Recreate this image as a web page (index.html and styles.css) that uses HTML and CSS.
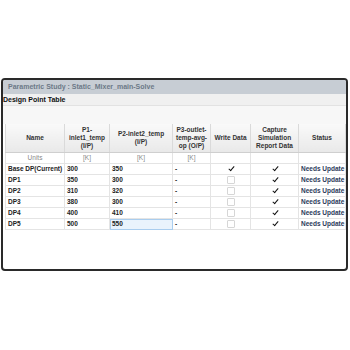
FILE: index.html
```html
<!DOCTYPE html>
<html lang="en">
<head>
    <meta charset="UTF-8">
    <title>Parametric Study</title>
    <link rel="stylesheet" href="styles.css">
</head>
<body>
    <div class="window">
        <div class="title-bar">Parametric Study : Static_Mixer_main-Solve</div>
        <div class="section-title">Design Point Table</div>
        <div class="band"></div>

        <table class="dp-table">
            <colgroup>
                <col class="c-name"><col class="c-p1"><col class="c-p2"><col class="c-p3">
                <col class="c-write"><col class="c-capture"><col class="c-status">
            </colgroup>
            <thead>
                <tr>
                    <th>Name</th>
                    <th>P1-<br>inlet1_temp<br>(I/P)</th>
                    <th>P2-inlet2_temp<br>(I/P)</th>
                    <th>P3-outlet-<br>temp-avg-<br>op (O/P)</th>
                    <th>Write Data</th>
                    <th>Capture<br>Simulation<br>Report Data</th>
                    <th>Status</th>
                </tr>
            </thead>
            <tbody>
                <tr class="units">
                    <td>Units</td><td>[K]</td><td>[K]</td><td>[K]</td><td></td><td></td><td></td>
                </tr>
                <tr>
                    <td>Base DP(Current)</td><td>300</td><td>350</td><td>-</td>
                    <td class="chk"><span class="box on"></span></td>
                    <td class="chk"><span class="box on"></span></td>
                    <td class="status">Needs Update</td>
                </tr>
                <tr>
                    <td>DP1</td><td>350</td><td>300</td><td>-</td>
                    <td class="chk"><span class="box"></span></td>
                    <td class="chk"><span class="box on"></span></td>
                    <td class="status">Needs Update</td>
                </tr>
                <tr>
                    <td>DP2</td><td>310</td><td>320</td><td>-</td>
                    <td class="chk"><span class="box"></span></td>
                    <td class="chk"><span class="box on"></span></td>
                    <td class="status">Needs Update</td>
                </tr>
                <tr>
                    <td>DP3</td><td>380</td><td>300</td><td>-</td>
                    <td class="chk"><span class="box"></span></td>
                    <td class="chk"><span class="box on"></span></td>
                    <td class="status">Needs Update</td>
                </tr>
                <tr>
                    <td>DP4</td><td>400</td><td>410</td><td>-</td>
                    <td class="chk"><span class="box"></span></td>
                    <td class="chk"><span class="box on"></span></td>
                    <td class="status">Needs Update</td>
                </tr>
                <tr>
                    <td>DP5</td><td>500</td><td class="selected">550</td><td>-</td>
                    <td class="chk"><span class="box"></span></td>
                    <td class="chk"><span class="box on"></span></td>
                    <td class="status">Needs Update</td>
                </tr>
            </tbody>
        </table>
    </div>
</body>
</html>
```
FILE: styles.css
```css
body {
    margin: 0;
    background: #fff;
    font-family: "Liberation Sans", Arial, sans-serif;
}
.window {
    margin: 78px 0 0 1px;
    width: 343px;
    height: 189px;
    border: 2px solid #2a2a2a;
    border-radius: 4px;
    background: #fff;
    overflow: hidden;
}
.title-bar {
    height: 14px;
    line-height: 14px;
    padding-left: 5px;
    background: #c7cdd4;
    color: #6c7987;
    font-size: 7px;
    font-weight: bold;
}
.section-title {
    height: 11px;
    line-height: 11px;
    padding-left: 0;
    background: #f0f0f0;
    border-bottom: 1px solid #e2e2e2;
    font-size: 7px;
    font-weight: bold;
    color: #111;
}
.band {
    height: 18px;
    background: #f7f7f7;
}
.dp-table {
    margin-left: 2px;
    width: 340px;
    border-collapse: collapse;
    table-layout: fixed;
    font-size: 6.5px;
    font-weight: bold;
    color: #222;
}
.c-name { width: 59px; }
.c-p1 { width: 45px; }
.c-p2 { width: 63px; }
.c-p3 { width: 38px; }
.c-write { width: 40px; }
.c-capture { width: 48px; }
.c-status { width: 47px; }
.dp-table th {
    height: 28px;
    padding: 0;
    background: linear-gradient(#f9f9f9, #e9e9e9);
    border-left: 1px solid #dadada;
    border-right: 1px solid #dadada;
    border-bottom: 1px solid #cfcfcf;
    line-height: 8px;
    color: #333;
    text-align: center;
}
.dp-table td {
    height: 10px;
    padding: 0 0 0 2px;
    border: 1px solid #e4e4e4;
    line-height: 10px;
    white-space: nowrap;
    overflow: hidden;
}
.units td {
    text-align: center;
    font-weight: normal;
    color: #888;
    padding: 0;
}
.selected {
    background: #e9f3fc;
    outline: 1px solid #a9cdee;
    outline-offset: -1px;
}
.chk {
    text-align: center;
}
.dp-table td.chk {
    padding: 0;
}
.box {
    display: inline-block;
    width: 6px;
    height: 6px;
    border: 1px solid #d6d6d6;
    border-radius: 1px;
    vertical-align: middle;
    position: relative;
}
.box.on {
    border-color: transparent;
}
.box.on::after {
    content: "";
    position: absolute;
    left: 2px;
    top: -1px;
    width: 2px;
    height: 5px;
    border-right: 1.5px solid #111;
    border-bottom: 1.5px solid #111;
    transform: rotate(40deg);
}
.status {
    color: #2c3a5a;
}
```
